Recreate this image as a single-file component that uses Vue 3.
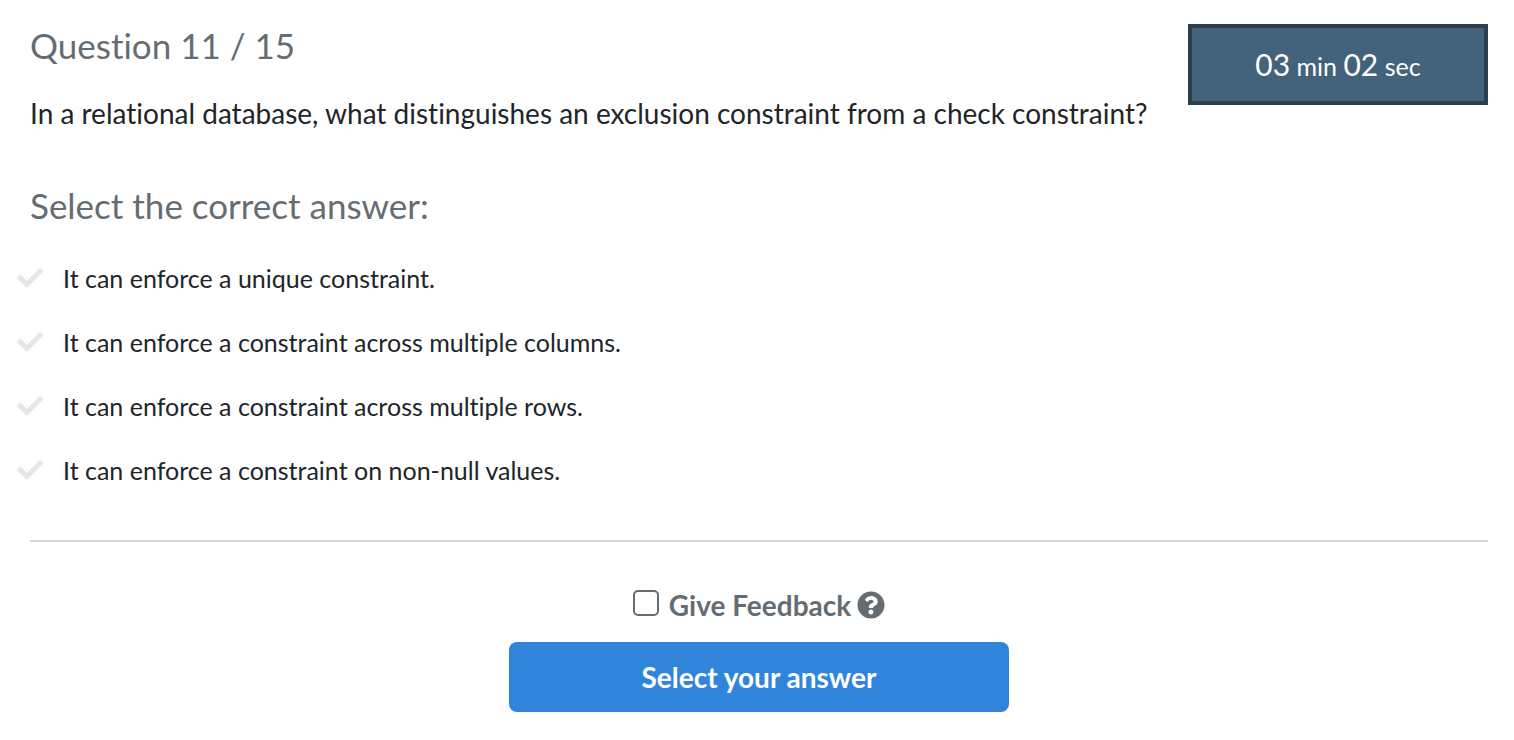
<script setup>
import { ref } from 'vue'

const answers = [
  'It can enforce a unique constraint.',
  'It can enforce a constraint across multiple columns.',
  'It can enforce a constraint across multiple rows.',
  'It can enforce a constraint on non-null values.',
]
const selected = ref(null)
const feedback = ref(false)
</script>

<template>
  <main class="quiz">
    <header class="top">
      <div class="question">
        <h1 class="heading">Question 11 / 15</h1>
        <p class="prompt">In a relational database, what distinguishes an exclusion constraint from a check constraint?</p>
      </div>
      <div class="timer" role="timer">
        <span><span class="digits">03</span> min <span class="digits">02</span> sec</span>
      </div>
    </header>

    <h2 class="heading">Select the correct answer:</h2>
    <div class="answers" role="radiogroup" aria-label="Answers">
      <label v-for="(answer, i) in answers" :key="i" class="answer">
        <input v-model="selected" class="radio" type="radio" name="answer" :value="i" />
        <svg class="check" viewBox="0 0 512 512" aria-hidden="true">
          <path d="M173.898 439.404l-166.4-166.4c-9.997-9.997-9.997-26.206 0-36.204l36.203-36.204c9.997-9.998 26.207-9.998 36.204 0L192 312.69 432.095 72.596c9.997-9.997 26.207-9.997 36.204 0l36.203 36.204c9.997 9.997 9.997 26.206 0 36.204l-294.4 294.401c-9.998 9.997-26.207 9.997-36.204-.001z" />
        </svg>
        <span>{{ answer }}</span>
      </label>
    </div>

    <footer class="actions">
      <label class="feedback">
        <input v-model="feedback" class="box" type="checkbox" />
        <span>Give Feedback</span>
        <svg class="help" viewBox="0 0 512 512" aria-hidden="true">
          <path d="M504 256c0 136.997-111.043 248-248 248S8 392.997 8 256C8 119.083 119.043 8 256 8s248 111.083 248 248zM262.655 90c-54.497 0-89.255 22.957-116.549 63.758-3.536 5.286-2.353 12.415 2.715 16.258l34.699 26.31c5.205 3.947 12.621 3.008 16.665-2.122 17.864-22.658 30.113-35.797 57.303-35.797 20.429 0 45.698 13.148 45.698 32.958 0 14.976-12.363 22.667-32.534 33.976C247.128 238.528 216 254.941 216 296v4c0 6.627 5.373 12 12 12h56c6.627 0 12-5.373 12-12v-1.333c0-28.462 83.186-29.647 83.186-106.667 0-58.002-60.165-102-116.531-102zM256 338c-25.365 0-46 20.635-46 46 0 25.364 20.635 46 46 46s46-20.636 46-46c0-25.365-20.635-46-46-46z" />
        </svg>
      </label>
      <button class="submit" type="button">Select your answer</button>
    </footer>
  </main>
</template>

<style>
body {
  margin: 0;
  background: #fff;
}
</style>

<style scoped>
.quiz {
  padding: 24px 26px 28px 30px;
  font-family: Lato, "Liberation Sans", sans-serif;
  font-variant-ligatures: none;
  color: #212529;
}
.top {
  display: flex;
  justify-content: space-between;
  align-items: flex-start;
  margin-bottom: 49px;
}
.heading {
  margin: 0;
  font-size: 35px;
  line-height: 42px;
  font-weight: 400;
  color: #666d72;
}
.prompt {
  margin: 25px 0 0;
  font-size: 28px;
  line-height: 44px;
}
.timer {
  box-sizing: border-box;
  flex: 0 0 300px;
  padding: 18px 0 15px;
  border: 4px solid #2b3f4f;
  background: #43637c;
  color: #fff;
  font-size: 25px;
  line-height: 40px;
  text-align: center;
}
.digits {
  font-size: 30px;
  line-height: 1;
}
.answers {
  display: grid;
  gap: 24px;
  margin: 32px 0 0 -13px;
}
.answer {
  display: flex;
  align-items: center;
  gap: 20px;
  font-size: 25px;
  line-height: 40px;
}
.radio {
  position: absolute;
  appearance: none;
  margin: 0;
}
.check {
  width: 26px;
  height: 26px;
  fill: #e6e6e6;
}
.actions {
  display: flex;
  flex-direction: column;
  align-items: center;
  margin-top: 50px;
  padding-top: 43px;
  border-top: 2px solid #d8d8d8;
}
.feedback {
  display: flex;
  align-items: center;
  font-size: 28px;
  line-height: 40px;
  font-weight: 700;
  color: #666d72;
}
.box {
  box-sizing: border-box;
  appearance: none;
  width: 26px;
  height: 26px;
  margin: 0 10px 4px 0;
  border: 2px solid #6b6b6b;
  border-radius: 5px;
  background: #fff;
}
.box:checked {
  background: #3085db;
}
.help {
  width: 28px;
  height: 28px;
  margin-left: 6px;
  fill: #666d72;
}
.submit {
  width: 500px;
  max-width: 100%;
  height: 70px;
  margin-top: 17px;
  border: 0;
  border-radius: 8px;
  background: #3085db;
  color: #fff;
  font: inherit;
  font-size: 28px;
  font-weight: 700;
}
</style>
